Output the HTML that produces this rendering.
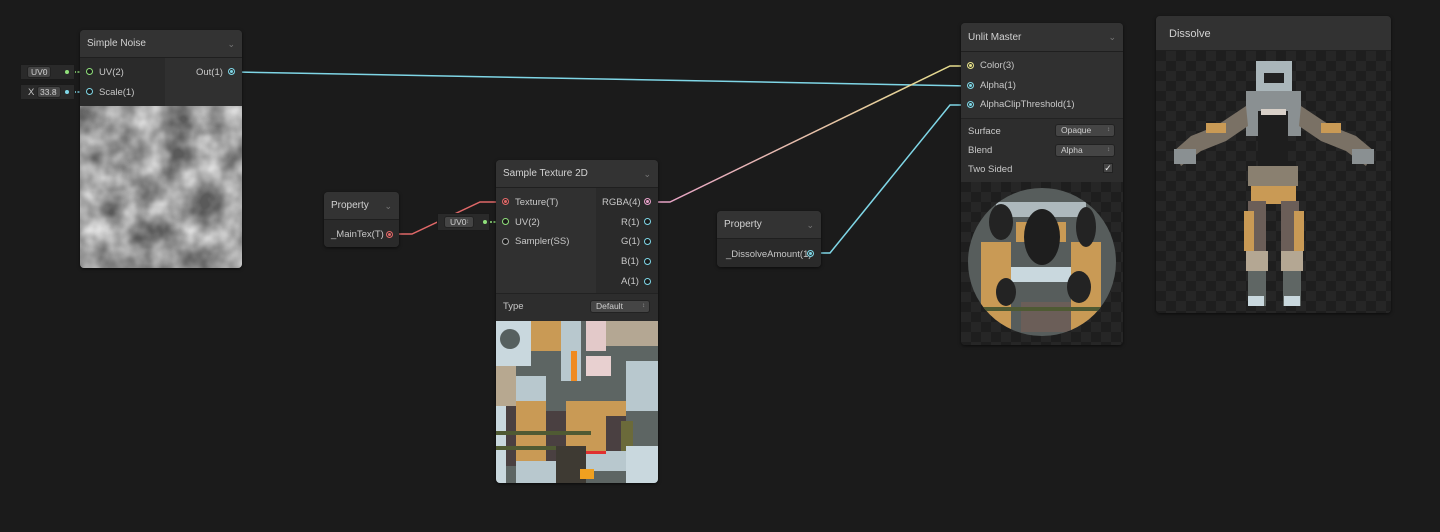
<!DOCTYPE html>
<html><head><meta charset="utf-8"><style>
*{box-sizing:border-box;margin:0;padding:0}
body{width:1440px;height:532px;background:#1b1b1b;position:relative;overflow:hidden;font-family:"Liberation Sans",sans-serif;color:#c8c8c8;font-size:9.5px}
.n{position:absolute;background:#2d2d2d;border-radius:4px;overflow:hidden;box-shadow:0 1px 3px rgba(0,0,0,.6)}
.h{position:absolute;left:0;right:0;top:0;background:#333;border-bottom:1px solid #1f1f1f;font-size:10px;color:#d2d2d2;padding-left:7px}
.chev{position:absolute;right:7px;color:#777;font-size:9px}
.t{position:absolute;white-space:nowrap}
.p{position:absolute;width:7px;height:7px;border-radius:50%;border:1.5px solid #7fd6e6;background:#1b1b1b}
.pf{background:#7fd6e6;box-shadow:inset 0 0 0 1px #222}
.box{position:absolute;background:#2a2a2a;border:1px solid #1a1a1a;}
.dd{position:absolute;background:#454545;border:1px solid #222;border-radius:3px;font-size:8.5px;color:#cfcfcf;padding-left:5px;line-height:11px}
.dd:after{content:"\2195";position:absolute;right:4px;font-size:6px;color:#999}
.chk{background-color:#1e1e1e;background-image:linear-gradient(45deg,#262626 25%,transparent 25%,transparent 75%,#262626 75%),linear-gradient(45deg,#262626 25%,transparent 25%,transparent 75%,#262626 75%);background-size:20px 20px;background-position:0 0,10px 10px}
</style></head><body>

<svg width="1440" height="532" style="position:absolute;left:0;top:0">
<defs><linearGradient id="g1" x1="0" x2="1"><stop offset="0" stop-color="#e6a0c8"/><stop offset="1" stop-color="#e6e08a"/></linearGradient></defs>
<path d="M236 72 L970 86" stroke="#7fd6e6" stroke-width="1.5" fill="none"/>
<path d="M650 202 L670 202 L950 66 L970 66" stroke="url(#g1)" stroke-width="1.5" fill="none"/>
<path d="M813 253 L830 253 L950 105 L970 105" stroke="#7fd6e6" stroke-width="1.5" fill="none"/>
<path d="M391 234 L412 234 L480 202 L506 202" stroke="#e06868" stroke-width="1.5" fill="none"/>
<path d="M67 72 L88 72" stroke="#8fe07a" stroke-width="1.5" stroke-dasharray="2 1.5"/>
<path d="M67 92 L88 92" stroke="#7fd6e6" stroke-width="1.5" stroke-dasharray="2 1.5"/>
<path d="M483 222 L505 222" stroke="#8fe07a" stroke-width="1.5" stroke-dasharray="2 1.5"/>
</svg>

<div class="box" style="left:20px;top:64px;width:55px;height:16px"><div class="dd" style="left:6px;top:1px;width:24px;height:12px;padding-left:3px">UV0</div><div style="position:absolute;left:44px;top:5px;width:4px;height:4px;border-radius:50%;background:#8fe07a"></div></div>
<div class="box" style="left:20px;top:84px;width:55px;height:16px"><span class="t" style="left:7px;top:2px">X</span><div class="dd" style="left:16px;top:1px;width:24px;height:12px;padding-left:2px">33.8</div><div style="position:absolute;left:44px;top:5px;width:4px;height:4px;border-radius:50%;background:#7fd6e6"></div></div>
<div class="box" style="left:437px;top:213px;width:53px;height:18px"><div class="dd" style="left:6px;top:2px;width:30px;height:12px">UV0</div><div style="position:absolute;left:45px;top:6px;width:4px;height:4px;border-radius:50%;background:#8fe07a"></div></div>

<div class="n" style="left:80px;top:30px;width:162px;height:238px">
<div class="h" style="height:28px;line-height:28px">Simple Noise<span class="chev">⌄</span></div>
<div style="position:absolute;left:0;top:28px;width:85px;height:48px;background:#2a2a2a"></div>
<div style="position:absolute;left:85px;top:28px;width:77px;height:48px;background:#303030"></div>
<div class="p" style="left:6px;top:38px;border-color:#8fe07a"></div><span class="t" style="left:19px;top:37px">UV(2)</span>
<div class="p" style="left:6px;top:58px"></div><span class="t" style="left:19px;top:57px">Scale(1)</span>
<span class="t" style="left:116px;top:37px">Out(1)</span><div class="p pf" style="left:148px;top:38px"></div>
<svg style="position:absolute;left:0;top:76px" width="162" height="162"><filter id="nz"><feTurbulence type="fractalNoise" baseFrequency="0.035" numOctaves="3" seed="4"/><feColorMatrix type="matrix" values="0 0 0 0 0 0 0 0 0 0 0 0 0 0 0 1.5 0 0 0 -0.2"/></filter><rect width="162" height="162" fill="#e4e4e4"/><rect width="162" height="162" fill="#000" filter="url(#nz)" opacity=".6"/></svg>
</div>

<div class="n" style="left:324px;top:192px;width:75px;height:55px">
<div class="h" style="height:28px;line-height:28px">Property<span class="chev">⌄</span></div>
<div style="position:absolute;left:0;top:28px;right:0;bottom:0;background:#2a2a2a"></div>
<span class="t" style="left:7px;top:37px">_MainTex(T)</span><div class="p pf" style="left:62px;top:39px;border-color:#e06868;background:#e06868"></div>
</div>

<div class="n" style="left:496px;top:160px;width:162px;height:323px">
<div class="h" style="height:28px;line-height:28px">Sample Texture 2D<span class="chev">⌄</span></div>
<div style="position:absolute;left:0;top:28px;width:100px;height:105px;background:#303030"></div>
<div style="position:absolute;left:100px;top:28px;width:62px;height:105px;background:#2a2a2a"></div>
<div class="p pf" style="left:6px;top:38px;border-color:#e06868;background:#e06868"></div><span class="t" style="left:19px;top:37px">Texture(T)</span>
<div class="p" style="left:6px;top:58px;border-color:#8fe07a"></div><span class="t" style="left:19px;top:57px">UV(2)</span>
<div class="p" style="left:6px;top:78px;border-color:#aaa"></div><span class="t" style="left:19px;top:76px">Sampler(SS)</span>
<span class="t" style="left:106px;top:37px">RGBA(4)</span><div class="p pf" style="left:148px;top:38px;border-color:#e6a0c8;background:#e6a0c8"></div>
<span class="t" style="left:125px;top:57px">R(1)</span><div class="p" style="left:148px;top:58px"></div>
<span class="t" style="left:125px;top:76px">G(1)</span><div class="p" style="left:148px;top:78px"></div>
<span class="t" style="left:125px;top:96px">B(1)</span><div class="p" style="left:148px;top:98px"></div>
<span class="t" style="left:125px;top:116px">A(1)</span><div class="p" style="left:148px;top:118px"></div>
<div style="position:absolute;left:0;top:133px;right:0;height:1px;background:#222"></div>
<span class="t" style="left:7px;top:141px">Type</span><div class="dd" style="left:94px;top:140px;width:60px;height:13px">Default</div>
<svg style="position:absolute;left:0;top:161px" width="162" height="162">
<rect width="162" height="162" fill="#5d6563"/>
<rect x="0" y="0" width="35" height="45" fill="#c9d8de"/><circle cx="14" cy="18" r="10" fill="#56605f"/>
<rect x="35" y="0" width="30" height="30" fill="#c99a55"/><rect x="65" y="0" width="20" height="60" fill="#b8c8ce"/>
<rect x="90" y="0" width="20" height="30" fill="#e3c9c9"/><rect x="110" y="0" width="52" height="25" fill="#b4a793"/>
<rect x="0" y="45" width="20" height="40" fill="#b7a890"/><rect x="20" y="55" width="30" height="25" fill="#b8c8ce"/>
<rect x="75" y="30" width="6" height="30" fill="#ef8a20"/><rect x="90" y="35" width="25" height="20" fill="#e8d0d0"/>
<rect x="130" y="40" width="32" height="50" fill="#b8c8ce"/><rect x="0" y="85" width="10" height="77" fill="#c9d8de"/>
<rect x="10" y="85" width="10" height="60" fill="#4a4041"/><rect x="20" y="80" width="30" height="70" fill="#c99a55"/>
<rect x="50" y="90" width="20" height="60" fill="#4a4041"/><rect x="70" y="80" width="25" height="50" fill="#c99a55"/>
<rect x="95" y="80" width="35" height="55" fill="#c99a55"/><rect x="110" y="95" width="20" height="40" fill="#4a4041"/>
<rect x="125" y="100" width="12" height="30" fill="#6b6a3a"/><rect x="0" y="110" width="95" height="4" fill="#4f5a33"/>
<rect x="0" y="125" width="60" height="4" fill="#4f5a33"/><rect x="60" y="125" width="30" height="37" fill="#3e3a33"/>
<rect x="90" y="130" width="40" height="20" fill="#b8c8ce"/><rect x="130" y="125" width="32" height="37" fill="#c9d8de"/>
<rect x="20" y="140" width="40" height="22" fill="#b8c8ce"/><rect x="84" y="148" width="14" height="10" fill="#f0a020"/>
<rect x="90" y="130" width="20" height="3" fill="#e03030"/>
</svg>
</div>

<div class="n" style="left:717px;top:211px;width:104px;height:56px">
<div class="h" style="height:28px;line-height:28px">Property<span class="chev">⌄</span></div>
<div style="position:absolute;left:0;top:28px;right:0;bottom:0;background:#2a2a2a"></div>
<span class="t" style="left:9px;top:38px">_DissolveAmount(1)</span><div class="p pf" style="left:90px;top:39px"></div>
</div>

<div class="n" style="left:961px;top:23px;width:162px;height:322px">
<div class="h" style="height:29px;line-height:29px">Unlit Master<span class="chev">⌄</span></div>
<div style="position:absolute;left:0;top:29px;right:0;height:66px;background:#303030"></div>
<div class="p pf" style="left:6px;top:39px;border-color:#e6e08a;background:#e6e08a"></div><span class="t" style="left:19px;top:37px">Color(3)</span>
<div class="p pf" style="left:6px;top:59px"></div><span class="t" style="left:19px;top:57px">Alpha(1)</span>
<div class="p pf" style="left:6px;top:78px"></div><span class="t" style="left:19px;top:76px">AlphaClipThreshold(1)</span>
<div style="position:absolute;left:0;top:95px;right:0;height:1px;background:#222"></div>
<span class="t" style="left:7px;top:103px">Surface</span><div class="dd" style="left:94px;top:101px;width:60px;height:13px">Opaque</div>
<span class="t" style="left:7px;top:122px">Blend</span><div class="dd" style="left:94px;top:121px;width:60px;height:13px">Alpha</div>
<span class="t" style="left:7px;top:141px">Two Sided</span>
<div style="position:absolute;left:142px;top:140px;width:10px;height:10px;background:#454545;border:1px solid #222;color:#eee;font-size:9px;line-height:9px;text-align:center">✓</div>
<div class="chk" style="position:absolute;left:0;top:159px;width:162px;height:163px">
<svg width="162" height="163"><clipPath id="cc"><circle cx="81" cy="80" r="74"/></clipPath>
<g clip-path="url(#cc)">
<rect x="0" y="0" width="162" height="163" fill="#575d5c"/>
<rect x="20" y="60" width="30" height="90" fill="#c99a55"/><rect x="110" y="60" width="30" height="90" fill="#c99a55"/>
<rect x="55" y="40" width="50" height="20" fill="#c99a55"/><rect x="60" y="120" width="50" height="30" fill="#6b5e58"/>
<rect x="35" y="20" width="90" height="15" fill="#aeb9bd"/><rect x="50" y="85" width="60" height="15" fill="#c9d8de"/>
<ellipse cx="81" cy="55" rx="18" ry="28" fill="#1e1e1e"/><ellipse cx="40" cy="40" rx="12" ry="18" fill="#232323"/>
<ellipse cx="125" cy="45" rx="10" ry="20" fill="#232323"/><ellipse cx="45" cy="110" rx="10" ry="14" fill="#232323"/>
<ellipse cx="118" cy="105" rx="12" ry="16" fill="#232323"/><rect x="0" y="125" width="162" height="4" fill="#4f5a33"/>
</g></svg></div>
</div>

<div class="n" style="left:1156px;top:16px;width:235px;height:297px;background:#252525">
<div class="h" style="height:35px;line-height:36px;font-size:11px;padding-left:13px;background:#323232">Dissolve</div>
<div class="chk" style="position:absolute;left:0;top:35px;width:235px;height:262px">
<svg width="235" height="262">
<rect x="100" y="10" width="36" height="30" fill="#aab6ba"/><rect x="108" y="22" width="20" height="10" fill="#222"/>
<rect x="90" y="40" width="55" height="45" fill="#8a9092"/><rect x="102" y="60" width="30" height="55" fill="#1e1e1e"/>
<rect x="105" y="58" width="25" height="6" fill="#d8d0c8"/>
<path d="M90 55 L60 75 L35 85 L18 100 L25 115 L45 100 L70 90 L92 75Z" fill="#7a7165"/>
<path d="M145 55 L175 75 L200 85 L218 100 L210 115 L190 100 L165 90 L143 75Z" fill="#7a7165"/>
<rect x="50" y="72" width="20" height="10" fill="#c99a55"/><rect x="165" y="72" width="20" height="10" fill="#c99a55"/>
<rect x="18" y="98" width="22" height="15" fill="#8a9092"/><rect x="196" y="98" width="22" height="15" fill="#8a9092"/>
<rect x="92" y="115" width="50" height="20" fill="#8a8070"/><rect x="95" y="135" width="45" height="18" fill="#c99a55"/>
<rect x="92" y="150" width="18" height="50" fill="#6b5e58"/><rect x="125" y="150" width="18" height="50" fill="#6b5e58"/>
<rect x="88" y="160" width="10" height="40" fill="#c99a55"/><rect x="138" y="160" width="10" height="40" fill="#c99a55"/>
<rect x="90" y="200" width="22" height="20" fill="#b4a793"/><rect x="125" y="200" width="22" height="20" fill="#b4a793"/>
<rect x="92" y="220" width="18" height="35" fill="#5f6664"/><rect x="127" y="220" width="18" height="35" fill="#5f6664"/>
<rect x="92" y="245" width="16" height="10" fill="#c9d8de"/><rect x="128" y="245" width="16" height="10" fill="#c9d8de"/>
</svg></div>
</div>

</body></html>
